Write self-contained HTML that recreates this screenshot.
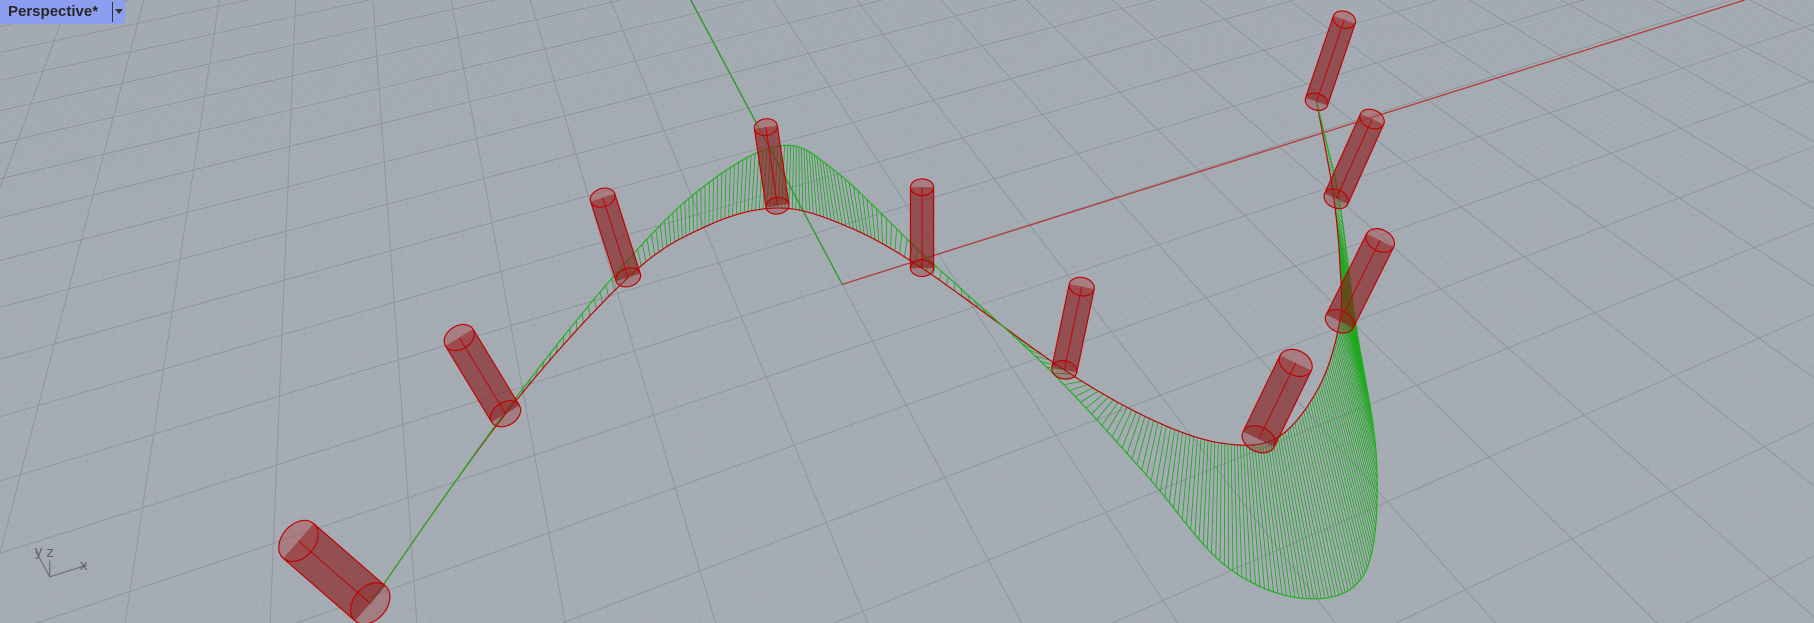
<!DOCTYPE html>
<html><head><meta charset="utf-8"><style>
html,body{margin:0;padding:0;width:1814px;height:623px;overflow:hidden;background:#a6acb4;}
#v{position:absolute;left:0;top:0;overflow:hidden}
#lab{position:absolute;left:0;top:0;width:125px;height:24px;background:#8d9ef0;border-bottom-right-radius:4px;font:bold 15px "Liberation Sans",sans-serif;color:#262626;}
#lab span{position:absolute;left:8px;top:3px}
#sep{position:absolute;left:112px;top:2px;width:1px;height:20px;background:#333}
#tri{position:absolute;left:115px;top:9px;width:0;height:0;border-left:4px solid transparent;border-right:4px solid transparent;border-top:5px solid #333}
</style></head><body>
<svg id="v" width="1814" height="623" viewBox="0 0 1568 539" preserveAspectRatio="none" xmlns="http://www.w3.org/2000/svg">
<g id="gmin" stroke="#a0a6ae" stroke-width="0.5" fill="none"></g>
<g id="gmaj" stroke="#8d939b" stroke-width="0.8" fill="none"></g>
<line x1="728" y1="246" x2="1508" y2="0" stroke="#b33a3a" stroke-width="1.1"/>
<line x1="728" y1="246" x2="597" y2="0" stroke="#2a9a2a" stroke-width="1.1"/>
<g id="surf" stroke="#1aa81a" stroke-width="0.7" fill="none"></g>
<path id="rc" stroke="#c00000" stroke-width="1" fill="none"/>
<path id="gc" stroke="#1fb01f" stroke-width="1" fill="none"/>
<g id="cyl"></g>
<g stroke="#6a6f76" stroke-width="1" fill="none">
<path d="M43 485 L43 499 L75 489 M43 499 L31 477"/>
</g>
<g font-family="Liberation Sans,sans-serif" font-size="13" fill="#5f646b">
<text x="30" y="481">y</text><text x="40" y="482">z</text><text x="69" y="493">x</text>
</g>
</svg>
<div id="lab"><span>Perspective*</span><div id="sep"></div><div id="tri"></div></div>
<script>
var NS="http://www.w3.org/2000/svg";
function el(p,t,a){var e=document.createElementNS(NS,t);for(var k in a)e.setAttribute(k,a[k]);p.appendChild(e);return e;}
var VX=[4000,-800],VY=[280,-600],O=[728,246],A=0.026,B=0.055;
function P(u,v){var w=A*u+B*v+1;return[(A*u*VX[0]+B*v*VY[0]+O[0])/w,(A*u*VX[1]+B*v*VY[1]+O[1])/w];}
var gmin=document.getElementById('gmin'),gmaj=document.getElementById('gmaj');
function seg(g,p,q){el(g,'line',{x1:p[0].toFixed(1),y1:p[1].toFixed(1),x2:q[0].toFixed(1),y2:q[1].toFixed(1)});}
for(var i=-700;i<=700;i++){var u=i/10;var g=(i%10==0)?gmaj:gmin;
 var vmin=(0.04-1-A*u)/B; var v0=Math.max(vmin,-25);
 if(1+A*u+B*v0<0.03)continue; seg(g,P(u,v0),P(u,v0+3000));}
for(var i=-250;i<=600;i++){var v=i/10;var g=(i%10==0)?gmaj:gmin;
 var umin=(0.04-1-B*v)/A; var u0=Math.max(umin,-80);
 if(1+A*u0+B*v<0.03)continue; seg(g,P(u0,v),P(u0+3000,v));}
function cr(pts,n){var out=[];var m=pts.length-1;for(var k=0;k<n;k++){var t=k/(n-1)*m;var s=Math.min(Math.floor(t),m-1);var f=t-s;
 var p0=pts[Math.max(s-1,0)],p1=pts[s],p2=pts[s+1],p3=pts[Math.min(s+2,m)];
 var r=[0,1].map(function(j){return 0.5*((2*p1[j])+(-p0[j]+p2[j])*f+(2*p0[j]-5*p1[j]+4*p2[j]-p3[j])*f*f+(-p0[j]+3*p1[j]-3*p2[j]+p3[j])*f*f*f);});out.push(r);}return out;}
var R=[[320,522],[437,358],[543,240],[610,196],[672,180],[730,195],[797,232],[920,320],[1000,365],[1060,384],[1105,378],[1140,335],[1158,278],[1158,225],[1153,172],[1145,125],[1138,88]];
var G=[[320,522],[440,352],[540,228],[610,160],[675,126],[722,148],[800,222],[905,318],[990,410],[1060,490],[1130,518],[1180,495],[1190,400],[1172,280],[1158,175],[1147,125],[1138,88]];
var N=600,rp=cr(R,N),gp=cr(G,N),surf=document.getElementById('surf');
for(var k=0;k<N;k+=2)seg(surf,rp[k],gp[k]);
function pd(a){return'M'+a.map(function(p){return p[0].toFixed(1)+' '+p[1].toFixed(1);}).join(' L');}
document.getElementById('rc').setAttribute('d',pd(rp));document.getElementById('gc').setAttribute('d',pd(gp));
var C=[[320,522,258,468,20],[437,358,397,292,14],[543,240,521,171,11],[672,178,662,110,10],[797,232,797,162,10],[920,320,935,248,11],[1088,380,1120,314,15],[1158,278,1193,208,13],[1155,172,1186,103,11],[1138,88,1162,17,10]];
var cg=document.getElementById('cyl');
C.forEach(function(c){var dx=c[2]-c[0],dy=c[3]-c[1],L=Math.hypot(dx,dy),nx=-dy/L,ny=dx/L,r=c[4];
 var ang=Math.atan2(ny,nx)*180/Math.PI, rb=r*0.72;
 el(cg,'polygon',{points:[c[0]+nx*r,c[1]+ny*r,c[2]+nx*r,c[3]+ny*r,c[2]-nx*r,c[3]-ny*r,c[0]-nx*r,c[1]-ny*r].join(' '),fill:'rgba(135,25,25,0.62)',stroke:'none'});
 el(cg,'ellipse',{cx:c[0],cy:c[1],rx:r,ry:rb,transform:'rotate('+ang.toFixed(1)+' '+c[0]+' '+c[1]+')',fill:'rgba(150,40,40,0.35)',stroke:'#c00000','stroke-width':1});
 el(cg,'ellipse',{cx:c[2],cy:c[3],rx:r,ry:rb,transform:'rotate('+ang.toFixed(1)+' '+c[2]+' '+c[3]+')',fill:'rgba(170,70,70,0.45)',stroke:'#c00000','stroke-width':1});
 el(cg,'line',{x1:c[0]+nx*r,y1:c[1]+ny*r,x2:c[2]+nx*r,y2:c[3]+ny*r,stroke:'#c00000','stroke-width':1});
 el(cg,'line',{x1:c[0]-nx*r,y1:c[1]-ny*r,x2:c[2]-nx*r,y2:c[3]-ny*r,stroke:'#c00000','stroke-width':1});
 el(cg,'line',{x1:c[0],y1:c[1],x2:c[2],y2:c[3],stroke:'#c00000','stroke-width':0.8});
});
</script>
</body></html>
